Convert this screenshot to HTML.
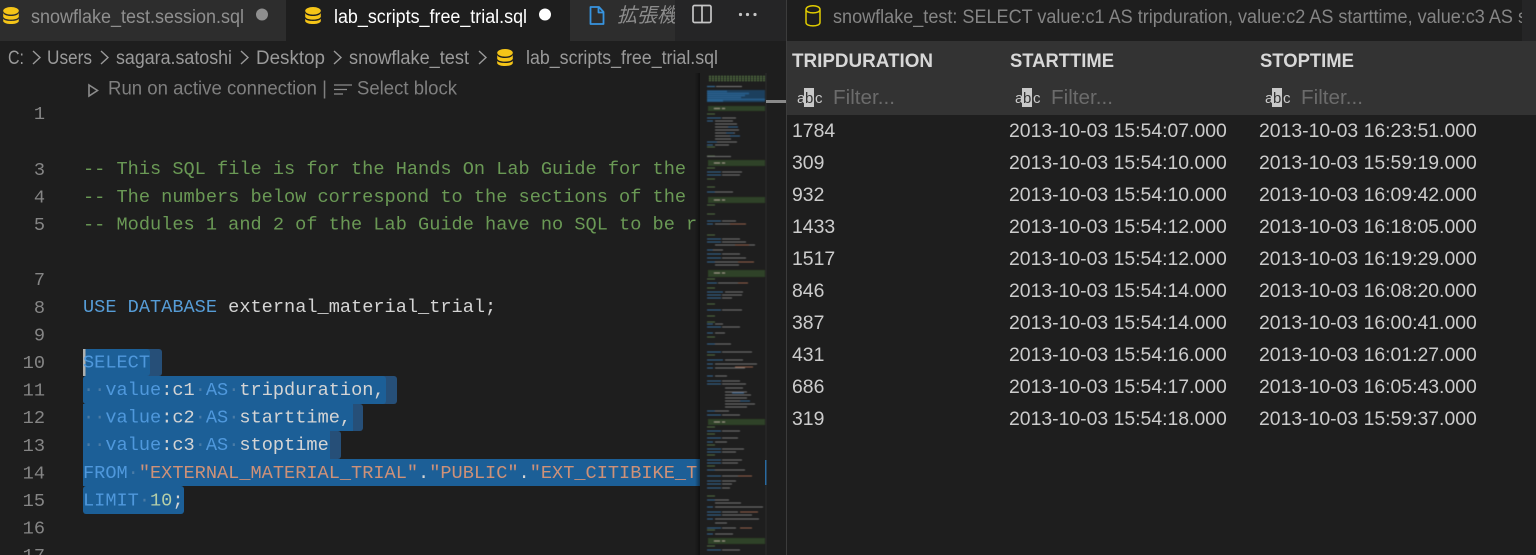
<!DOCTYPE html>
<html><head><meta charset="utf-8"><title>lab_scripts_free_trial.sql</title>
<style>
html,body{margin:0;padding:0;background:#1e1e1e;width:1536px;height:555px;overflow:hidden}
svg{display:block}
.ui{font-family:"Liberation Sans","Noto Sans CJK JP",sans-serif}
.m{font-family:"Liberation Mono",monospace;font-size:18.63px;white-space:pre}
.ln{fill:#858585;text-anchor:end}
.c{fill:#6a9955}.k{fill:#569cd6}.t{fill:#d4d4d4}.s{fill:#ce9178}.n{fill:#b5cea8}.d{fill:#4a7ba6}
.sk{fill:#4f98dc}
.r{font-family:"Liberation Sans",sans-serif;font-size:19.4px;fill:#cccccc}
.h{font-family:"Liberation Sans",sans-serif;font-size:19px;font-weight:bold;fill:#d8d8d8}
.f{font-family:"Liberation Sans",sans-serif;font-size:20px;fill:#6b6b6b}
.b{font-size:19px;fill:#9a9a9a}
.a{font-size:19px;fill:#8c8c8c}
</style></head><body>
<svg width="1536" height="555" viewBox="0 0 1536 555" xmlns="http://www.w3.org/2000/svg">
<defs>
<filter id="bl" x="-5%" y="-5%" width="110%" height="110%"><feGaussianBlur stdDeviation="0.65"/></filter>
<linearGradient id="sh" x1="0" x2="1" y1="0" y2="0"><stop offset="0" stop-color="#000" stop-opacity="0"/><stop offset="1" stop-color="#000" stop-opacity=".45"/></linearGradient>
<clipPath id="tab3"><rect x="570" y="0" width="105" height="41"/></clipPath>
<clipPath id="ttl"><rect x="787" y="0" width="735" height="41"/></clipPath>
<g id="db">
<ellipse cx="8" cy="3.800" rx="7.800" ry="3.800" fill="#f5c518"/>
<path d="M.2 6C1.400 8.400 4.600 9 8 9s6.600-.6 7.800-3v4C14.600 12 11.400 12.600 8 12.600S1.400 12 .2 10z" fill="#f5c518"/>
<path d="M.2 11.800C1.400 13.600 4.600 14 8 14s6.600-.4 7.800-2.200v2.400C15 16.200 11.600 17 8 17S1 16.200.2 14.200z" fill="#f5c518"/>
</g>
<g id="abc"><rect x="7" y="0" width="10" height="19" fill="#c8c8c8"/>
<text x="0" y="15" font-family="Liberation Sans,sans-serif" font-size="15" fill="#c8c8c8">a</text>
<text x="8" y="15" font-family="Liberation Sans,sans-serif" font-size="15" fill="#333">b</text>
<text x="18" y="15" font-family="Liberation Sans,sans-serif" font-size="15" fill="#c8c8c8">c</text></g>
</defs>

<rect width="1536" height="555" fill="#1e1e1e"/>

<!-- Tabs -->
<rect x="0" y="0" width="786" height="41" fill="#252526"/>
<rect x="0" y="0" width="286" height="41" fill="#2d2d2d"/>
<rect x="286" y="0" width="284" height="41" fill="#1e1e1e"/>
<rect x="570" y="0" width="105" height="41" fill="#2d2d2d"/>
<use href="#db" x="3" y="7"/>
<text class="ui a" x="31" y="23" textLength="213" lengthAdjust="spacingAndGlyphs" style="fill:#8f8f8f">snowflake_test.session.sql</text>
<circle cx="262" cy="14.500" r="6" fill="#8f8f8f"/>
<use href="#db" x="305" y="7"/>
<text class="ui" x="334" y="23" font-size="19" fill="#ffffff" textLength="193" lengthAdjust="spacingAndGlyphs">lab_scripts_free_trial.sql</text>
<circle cx="545" cy="14.500" r="6" fill="#ffffff"/>
<path d="M590.500 7h8.500l4.500 5v12h-13z M598.500 7.500v5h5" fill="none" stroke="#3794e0" stroke-width="1.800" stroke-linejoin="round"/>
<g clip-path="url(#tab3)"><text class="ui" x="617" y="22" font-size="20" font-style="italic" fill="#8c8c8c">拡張機能</text></g>
<rect x="693" y="5.500" width="18" height="17" rx="1.500" fill="none" stroke="#c5c5c5" stroke-width="1.700"/>
<path d="M702 5.500v17" stroke="#c5c5c5" stroke-width="1.700"/>
<circle cx="740.500" cy="14.500" r="1.600" fill="#c5c5c5"/><circle cx="747.500" cy="14.500" r="1.600" fill="#c5c5c5"/><circle cx="755" cy="14.500" r="1.600" fill="#c5c5c5"/>

<!-- Breadcrumbs -->
<g class="ui">
<text class="b" x="8" y="64" textLength="16" lengthAdjust="spacingAndGlyphs">C:</text>
<text class="b" x="47" y="64" textLength="45" lengthAdjust="spacingAndGlyphs">Users</text>
<text class="b" x="116" y="64" textLength="116" lengthAdjust="spacingAndGlyphs">sagara.satoshi</text>
<text class="b" x="256" y="64" textLength="69" lengthAdjust="spacingAndGlyphs">Desktop</text>
<text class="b" x="349" y="64" textLength="120" lengthAdjust="spacingAndGlyphs">snowflake_test</text>
<text class="b" x="526" y="64" textLength="192" lengthAdjust="spacingAndGlyphs">lab_scripts_free_trial.sql</text>
</g>
<path d="M33 51l7 6.500-7 6.500M101 51l7 6.500-7 6.500M241 51l7 6.500-7 6.500M334 51l7 6.500-7 6.500M479 51l7 6.500-7 6.500" fill="none" stroke="#9a9a9a" stroke-width="1.400"/>
<use href="#db" x="497" y="49"/>

<!-- CodeLens -->
<path d="M89 85l8.500 5.500-8.500 5.500z" fill="none" stroke="#8c8c8c" stroke-width="1.600"/>
<text class="ui" x="108" y="94.500" font-size="19" fill="#7f7f7f" textLength="219" lengthAdjust="spacingAndGlyphs">Run on active connection |</text>
<path d="M334 85h18M334 89.500h13M334 94h9" stroke="#8c8c8c" stroke-width="1.200"/>
<text class="ui" x="357" y="94.500" font-size="19" fill="#7f7f7f" textLength="100" lengthAdjust="spacingAndGlyphs">Select block</text>

<!-- Selection -->
<g>
<rect x="83" y="349" width="79" height="27" rx="3" fill="#264f78"/>
<rect x="83" y="349" width="67" height="27" rx="3" fill="#1c5f97"/>
<rect x="83" y="376" width="314" height="28" rx="3" fill="#264f78"/>
<rect x="83" y="376" width="303" height="28" rx="3" fill="#1c5f97"/>
<rect x="83" y="404" width="280" height="27" rx="3" fill="#264f78"/>
<rect x="83" y="404" width="270" height="27" fill="#1c5f97"/>
<rect x="83" y="431" width="258" height="28" rx="3" fill="#264f78"/>
<rect x="83" y="431" width="247" height="28" fill="#1c5f97"/>
<rect x="83" y="459" width="625" height="27" fill="#1c5f97"/>
<rect x="83" y="486" width="101" height="28" rx="3" fill="#1c5f97"/>
<rect x="83" y="349" width="2.500" height="27" fill="#aeafad"/>
</g>

<!-- Line numbers -->
<g class="m ln" transform="translate(0,-1)">
<text x="45" y="120">1</text>
<text x="45" y="176">3</text>
<text x="45" y="203.500">4</text>
<text x="45" y="231">5</text>
<text x="45" y="286">7</text>
<text x="45" y="314">8</text>
<text x="45" y="341.500">9</text>
<text x="45" y="369">10</text>
<text x="45" y="396.500">11</text>
<text x="45" y="424">12</text>
<text x="45" y="452">13</text>
<text x="45" y="479.500">14</text>
<text x="45" y="507">15</text>
<text x="45" y="534.500">16</text>
<text x="45" y="562">17</text>
</g>

<!-- Code -->
<g class="m" transform="translate(0,-0.800)">
<text x="83" y="175" class="c">-- This SQL file is for the Hands On Lab Guide for the</text>
<text x="83" y="203" class="c">-- The numbers below correspond to the sections of the</text>
<text x="83" y="230.500" class="c">-- Modules 1 and 2 of the Lab Guide have no SQL to be r</text>
<text x="83" y="313"><tspan class="k">USE DATABASE</tspan><tspan class="t"> external_material_trial;</tspan></text>
<text x="83" y="368.500"><tspan class="sk">SELECT</tspan></text>
<text x="83" y="396"><tspan class="d">··</tspan><tspan class="sk">value</tspan><tspan class="t">:c1</tspan><tspan class="d">·</tspan><tspan class="sk">AS</tspan><tspan class="d">·</tspan><tspan class="t">tripduration,</tspan></text>
<text x="83" y="423.500"><tspan class="d">··</tspan><tspan class="sk">value</tspan><tspan class="t">:c2</tspan><tspan class="d">·</tspan><tspan class="sk">AS</tspan><tspan class="d">·</tspan><tspan class="t">starttime,</tspan></text>
<text x="83" y="451"><tspan class="d">··</tspan><tspan class="sk">value</tspan><tspan class="t">:c3</tspan><tspan class="d">·</tspan><tspan class="sk">AS</tspan><tspan class="d">·</tspan><tspan class="t">stoptime</tspan></text>
<text x="83" y="479"><tspan class="sk">FROM</tspan><tspan class="d">·</tspan><tspan class="s">"EXTERNAL_MATERIAL_TRIAL"</tspan><tspan class="t">.</tspan><tspan class="s">"PUBLIC"</tspan><tspan class="t">.</tspan><tspan class="s">"EXT_CITIBIKE_T</tspan></text>
<text x="83" y="506.500"><tspan class="sk">LIMIT</tspan><tspan class="d">·</tspan><tspan class="n">10</tspan><tspan class="t">;</tspan></text>
</g>

<!-- Minimap -->
<rect x="695" y="73" width="5" height="482" fill="url(#sh)"/>
<rect x="700" y="73" width="66" height="482" fill="#1e1e1e"/>
<path d="M766 73v482" stroke="#2c2c2c" stroke-width="1"/>
<g filter="url(#bl)" fill="none" stroke-width="1.100" opacity=".85">
<path d="M709 76.500h56M709 78.500h56M709 80.500h56" stroke="#5a7d48" stroke-width="1.500" stroke-dasharray="2 1"/>
<path d="M707 86.500h8" stroke="#3d7fb5"/><path d="M716 86.500h26" stroke="#8f8f8f"/>
<rect x="707" y="90" width="58" height="12" fill="#1f4468" stroke="none"/>
<path d="M707 91.500h20M707 93.500h42M707 95.500h38M707 97.500h34M707 99.500h58M707 101h16" stroke="#2c6da3" stroke-width="1.400"/>
<g stroke="none" fill="#33482b">
<rect x="708" y="106" width="57" height="5"/><rect x="708" y="160" width="57" height="6"/><rect x="708" y="197" width="57" height="6"/><rect x="708" y="270" width="57" height="7"/><rect x="708" y="419" width="57" height="6"/><rect x="708" y="538" width="57" height="6"/>
</g>
<path d="M714 108.500h6M722 108.500h3M714 163h6M722 163h3M714 200h6M722 200h3M714 273h6M722 273h3M714 422h6M722 422h3M714 541h6M722 541h3" stroke="#a8a890"/>
<path d="M707 114h8M707 147h8M707 156h8M707 168h8M707 179h8M707 187h8M707 205h8M707 214h8M707 235h8M707 279h8M707 288h8M707 304h8M707 316h8M707 322h8M707 337h8M707 355h8M707 427h8M707 434h8M707 445h8M707 455h8M707 466h8M707 496h8M707 530h8M707 546h8" stroke="#5a7d48"/>
<g stroke="#858585">
<path d="M722 118h14M715 121h18M715 124h22M715 127h20M715 130h24M715 133h20M715 136h20M715 139h16M715 142h22M715 145h14M707 156.500h24"/>
<path d="M722 172h20M722 175h18M715 192h18M722 221h14M715 224h18M722 239h18M722 242h24M715 245h40M707 250h16M722 254h18M722 258h24M715 262h38M715 265h24"/>
<path d="M718 283h22M725 292h18M722 295h20M722 298h10M722 310h20M715 324h8M722 327h18M715 333h10M715 344h16M722 352h30M725 360h18M715 364h42M715 368h30M715 376h12"/>
<path d="M722 381h18M722 384h24M725 388h18M725 392h22M725 395h26M725 398h22M725 401h24M725 404h30M725 407h22M715 411h14M722 415h18"/>
<path d="M722 431h18M722 438h16M715 442h12M722 449h22M722 452h14M722 460h20M722 463h16M715 470h30M722 476h24M722 481h14M722 484h10M722 488h8"/>
<path d="M715 500h14M715 503h26M715 507h48M722 512h16M722 515h30M715 519h44M715 523h12M722 528h14M715 534h18M722 550h18"/>
</g>
<g stroke="#3a76aa">
<path d="M707 118h14M707 121h6M707 142h10M707 145h6M707 172h14M707 175h14M707 192h8M707 221h14M707 224h6M707 239h14M707 242h14M707 250h6M707 254h14M707 258h14M707 262h8"/>
<path d="M707 283h10M707 292h16M707 295h14M707 298h14M707 310h14M707 324h6M707 327h14M707 333h6M707 344h8M707 352h14M707 360h16M707 364h6M707 368h6M707 376h6M707 381h14M707 384h14M707 411h8M707 415h14"/>
<path d="M707 431h14M707 438h14M707 442h6M707 449h14M707 452h14M707 460h14M707 463h14M707 470h8M707 476h14M707 481h14M707 484h14M707 488h14M707 500h8M707 507h6M707 512h14M707 515h14M707 519h6M707 528h14M707 534h6M707 550h14"/>
<path d="M728 127h10M730 136h10M726 133h8M732 393h12M740 401h10"/>
</g>
<path d="M730 224h16M735 245h14M738 262h16M738 283h10M735 367h18M738 476h14M740 512h18M740 528h12" stroke="#a76e50"/>
</g>
<rect x="765" y="460" width="1.500" height="25" fill="#2a6aa0"/>
<rect x="766" y="100" width="20" height="3" fill="#8a8a8a"/>

<!-- Right panel -->
<rect x="786" y="0" width="1" height="555" fill="#3c3c3c"/>
<rect x="787" y="0" width="749" height="41" fill="#1e1e1e"/>
<rect x="1522" y="0" width="14" height="41" fill="#252526"/>
<path d="M806 9.500c0-5 14-5 14 0v13c0 4.500-14 4.500-14 0zM806 9.500c0 4.500 14 4.500 14 0" fill="none" stroke="#e0cc00" stroke-width="1.500"/>
<g clip-path="url(#ttl)"><text class="ui" x="833" y="23" font-size="19" fill="#858585" textLength="694" lengthAdjust="spacingAndGlyphs">snowflake_test: SELECT value:c1 AS tripduration, value:c2 AS starttime, value:c3 AS s</text></g>
<rect x="787" y="41" width="749" height="74" fill="#333333"/>
<text class="h" x="792" y="67" textLength="141" lengthAdjust="spacingAndGlyphs">TRIPDURATION</text>
<text class="h" x="1010" y="67" textLength="104" lengthAdjust="spacingAndGlyphs">STARTTIME</text>
<text class="h" x="1260" y="67" textLength="94" lengthAdjust="spacingAndGlyphs">STOPTIME</text>
<use href="#abc" x="797" y="88"/><use href="#abc" x="1015" y="88"/><use href="#abc" x="1265" y="88"/>
<text class="f" x="833" y="104" textLength="62" lengthAdjust="spacingAndGlyphs">Filter...</text>
<text class="f" x="1051" y="104" textLength="62" lengthAdjust="spacingAndGlyphs">Filter...</text>
<text class="f" x="1301" y="104" textLength="62" lengthAdjust="spacingAndGlyphs">Filter...</text>

<text class="r" x="792" y="137">1784</text><text class="r" x="1009" y="137">2013-10-03 15:54:07.000</text><text class="r" x="1259" y="137">2013-10-03 16:23:51.000</text>
<text class="r" x="792" y="169">309</text><text class="r" x="1009" y="169">2013-10-03 15:54:10.000</text><text class="r" x="1259" y="169">2013-10-03 15:59:19.000</text>
<text class="r" x="792" y="201">932</text><text class="r" x="1009" y="201">2013-10-03 15:54:10.000</text><text class="r" x="1259" y="201">2013-10-03 16:09:42.000</text>
<text class="r" x="792" y="233">1433</text><text class="r" x="1009" y="233">2013-10-03 15:54:12.000</text><text class="r" x="1259" y="233">2013-10-03 16:18:05.000</text>
<text class="r" x="792" y="265">1517</text><text class="r" x="1009" y="265">2013-10-03 15:54:12.000</text><text class="r" x="1259" y="265">2013-10-03 16:19:29.000</text>
<text class="r" x="792" y="297">846</text><text class="r" x="1009" y="297">2013-10-03 15:54:14.000</text><text class="r" x="1259" y="297">2013-10-03 16:08:20.000</text>
<text class="r" x="792" y="329">387</text><text class="r" x="1009" y="329">2013-10-03 15:54:14.000</text><text class="r" x="1259" y="329">2013-10-03 16:00:41.000</text>
<text class="r" x="792" y="361">431</text><text class="r" x="1009" y="361">2013-10-03 15:54:16.000</text><text class="r" x="1259" y="361">2013-10-03 16:01:27.000</text>
<text class="r" x="792" y="393">686</text><text class="r" x="1009" y="393">2013-10-03 15:54:17.000</text><text class="r" x="1259" y="393">2013-10-03 16:05:43.000</text>
<text class="r" x="792" y="425">319</text><text class="r" x="1009" y="425">2013-10-03 15:54:18.000</text><text class="r" x="1259" y="425">2013-10-03 15:59:37.000</text>
</svg>
</body></html>
